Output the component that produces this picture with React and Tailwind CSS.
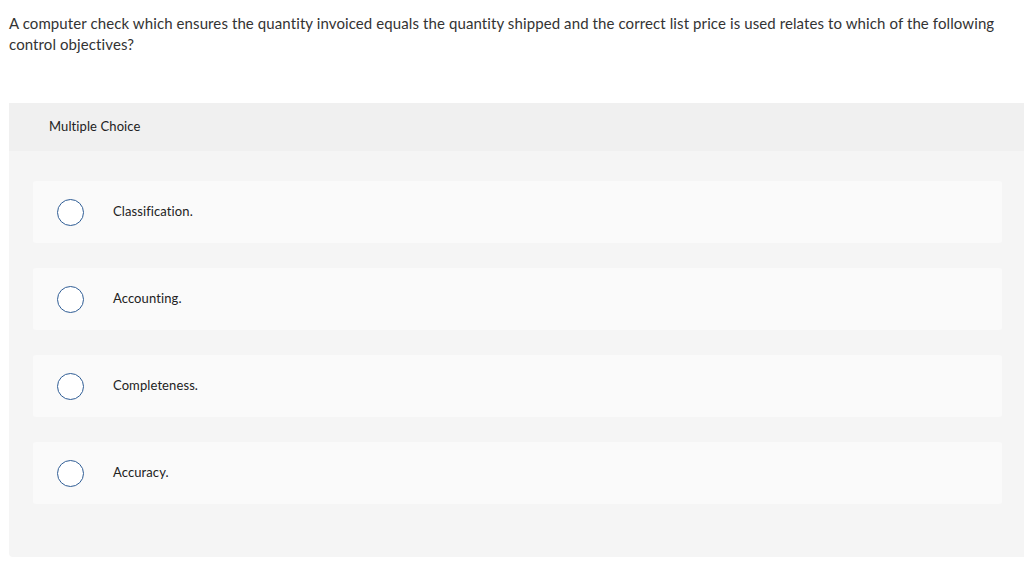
export default function App() {
  const options = ["Classification.", "Accounting.", "Completeness.", "Accuracy."];
  return (
    <div className="w-[1024px] h-[588px] overflow-hidden bg-white text-[#333]" style={{ fontFamily: "Lato, 'Noto Sans', sans-serif" }}>
      <div className="pl-[9px] pr-[20px] pt-[13px] text-[15px] leading-[21px] tracking-[0.1px] text-[#333]">
        A computer check which ensures the quantity invoiced equals the quantity shipped and the correct list price is used relates to which of the following control objectives?
      </div>
      <div className="ml-[9px] mt-[48px] w-[1017px] bg-[#f5f5f5] rounded-bl-[4px]">
        <div className="h-[48px] bg-[#f0f0f0] pl-[40px] flex items-center text-[13px] tracking-[0.1px] text-[#222]">
          Multiple Choice
        </div>
        <div className="px-[24px] pt-[30px] pb-[53px] flex flex-col gap-[25px]">
          {options.map((o) => (
            <div key={o} className="h-[62px] bg-[#fafafa] rounded-[3px] flex items-center pl-[24px]">
              <div className="w-[27px] h-[27px] rounded-full border border-[#2f5d95] bg-white shrink-0" />
              <div className="ml-[29px] text-[13px] tracking-[0.1px] text-[#222]">{o}</div>
            </div>
          ))}
        </div>
      </div>
    </div>
  );
}
